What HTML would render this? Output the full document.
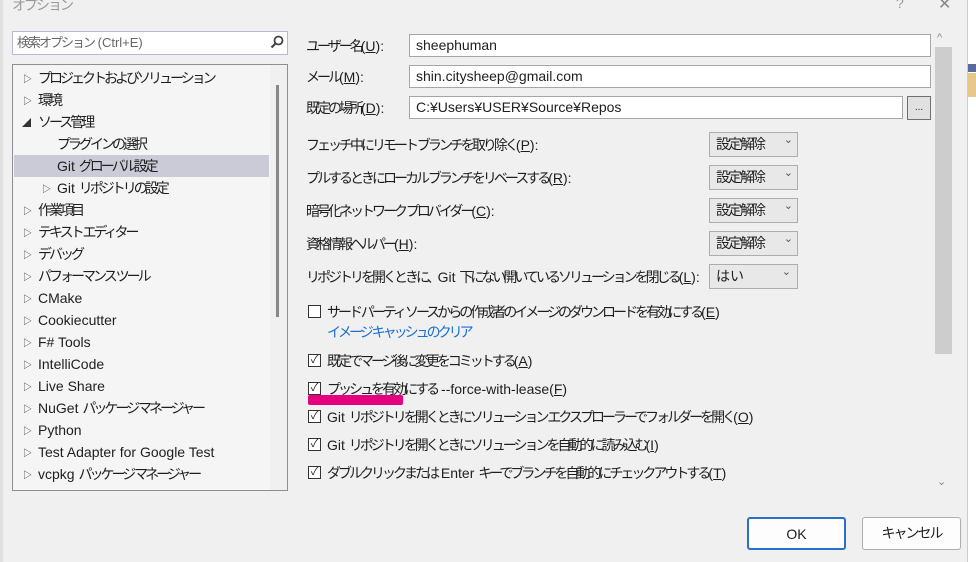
<!DOCTYPE html><html><head><meta charset="utf-8"><style>
*{margin:0;padding:0;box-sizing:border-box}
html,body{width:976px;height:562px;overflow:hidden}
body{background:#f0f0f0;font-family:"Liberation Sans","Noto Sans CJK JP",sans-serif;font-size:14px;color:#1e1e1e;position:relative}
.a{position:absolute;white-space:nowrap}
.j{letter-spacing:-3px}
.j2{letter-spacing:-2px}
.tree{left:12px;top:64px;width:276px;height:427px;border:1px solid #8e8e93;background:#f5f5f5}
.ti{position:absolute;height:22px;line-height:22px;font-size:14px;white-space:nowrap}
.tri{position:absolute;font-size:9px;color:#333;white-space:nowrap}
.inp{position:absolute;left:409px;width:522px;height:23px;background:#fff;border:1px solid #a6a6a6;line-height:21px;padding-left:6px;font-size:14px;white-space:nowrap}
.dd{position:absolute;left:709px;width:89px;height:25px;background:#e8e8e8;border:1px solid #adadad;line-height:23px;padding-left:6px;white-space:nowrap}
.dd:after{content:"⌄";position:absolute;right:6px;top:-4px;font-size:11px;color:#555}
.lbl{position:absolute;left:306px;font-size:14px;line-height:20px;white-space:nowrap}
.cb{position:absolute;left:308px;width:13px;height:13px;border:1px solid #333;background:#fff;font-size:11px;line-height:11px;text-align:center}
.ct{position:absolute;left:327px;line-height:20px;white-space:nowrap}
.btn{position:absolute;top:517px;width:99px;height:33px;border:1px solid #adadad;background:#fdfdfd;text-align:center;line-height:31px;border-radius:3px;white-space:nowrap}
</style></head><body>
<div class="a" style="left:0;top:0;width:3px;height:562px;background:#e0e0e0"></div>
<div class="a j2" style="left:12px;top:-5px;color:#999;font-size:14px">オプション</div>
<div class="a" style="left:896px;top:-5px;color:#999">?</div>
<div class="a" style="left:938px;top:-6px;color:#888;font-size:16px">✕</div>
<div class="a" style="left:967px;top:0;width:9px;height:562px;background:#fff;border-left:1px solid #ccc"></div>
<div class="a" style="left:968px;top:64px;width:8px;height:8px;background:#5a6a9a"></div>
<div class="a" style="left:968px;top:73px;width:8px;height:24px;background:#e5c98a"></div>
<div class="a" style="left:12px;top:31px;width:276px;height:24px;background:#fff;border:1px solid #b8b8d0;padding-left:4px;line-height:22px;color:#666;font-size:13px"><span class="j2">検索オプション</span> (Ctrl+E)</div>
<svg class="a" style="left:270px;top:35px" width="14" height="14"><circle cx="8.5" cy="5.5" r="4" fill="none" stroke="#444" stroke-width="1.8"/><line x1="5.5" y1="8.5" x2="1.5" y2="12.5" stroke="#444" stroke-width="2.2"/></svg>
<div class="a tree">
<div class="a" style="left:257px;top:0;width:17px;height:425px;background:#f0f0f0"></div>
<div class="a" style="left:263px;top:20px;width:3px;height:232px;background:#888"></div>
<div class="a" style="left:1px;top:90px;width:255px;height:22px;background:#cacbd6"></div>
</div>
<div style="position:absolute;left:12px;top:67px;width:260px">
<div class="ti j" style="top:0;left:26px">プロジェクトおよびソリューション</div><div class="tri" style="top:5px;left:11px">▷</div>
<div class="ti j" style="top:22px;left:26px">環境</div><div class="tri" style="top:27px;left:11px">▷</div>
<div class="ti j" style="top:44px;left:26px">ソース管理</div><div class="tri" style="top:49px;left:10px">◢</div>
<div class="ti j" style="top:66px;left:45px">プラグインの選択</div>
<div class="ti" style="top:88px;left:45px">Git <span class="j">グローバル設定</span></div>
<div class="ti" style="top:110px;left:45px">Git <span class="j">リポジトリの設定</span></div><div class="tri" style="top:115px;left:30px">▷</div>
<div class="ti j" style="top:132px;left:26px">作業項目</div><div class="tri" style="top:137px;left:11px">▷</div>
<div class="ti j" style="top:154px;left:26px">テキスト エディター</div><div class="tri" style="top:159px;left:11px">▷</div>
<div class="ti j" style="top:176px;left:26px">デバッグ</div><div class="tri" style="top:181px;left:11px">▷</div>
<div class="ti j" style="top:198px;left:26px">パフォーマンス ツール</div><div class="tri" style="top:203px;left:11px">▷</div>
<div class="ti" style="top:220px;left:26px">CMake</div><div class="tri" style="top:225px;left:11px">▷</div>
<div class="ti" style="top:242px;left:26px">Cookiecutter</div><div class="tri" style="top:247px;left:11px">▷</div>
<div class="ti" style="top:264px;left:26px">F# Tools</div><div class="tri" style="top:269px;left:11px">▷</div>
<div class="ti" style="top:286px;left:26px">IntelliCode</div><div class="tri" style="top:291px;left:11px">▷</div>
<div class="ti" style="top:308px;left:26px">Live Share</div><div class="tri" style="top:313px;left:11px">▷</div>
<div class="ti" style="top:330px;left:26px">NuGet <span class="j">パッケージ マネージャー</span></div><div class="tri" style="top:335px;left:11px">▷</div>
<div class="ti" style="top:352px;left:26px">Python</div><div class="tri" style="top:357px;left:11px">▷</div>
<div class="ti" style="top:374px;left:26px">Test Adapter for Google Test</div><div class="tri" style="top:379px;left:11px">▷</div>
<div class="ti" style="top:396px;left:26px">vcpkg <span class="j">パッケージ マネージャー</span></div><div class="tri" style="top:401px;left:11px">▷</div>
</div>
<div class="lbl" style="top:36px"><span class="j">ユーザー名</span>(<u>U</u>):</div>
<div class="lbl" style="top:67px"><span class="j">メール</span>(<u>M</u>):</div>
<div class="lbl" style="top:98px"><span class="j">既定の場所</span>(<u>D</u>):</div>
<div class="inp" style="top:34px">sheephuman</div>
<div class="inp" style="top:65px">shin.citysheep@gmail.com</div>
<div class="inp" style="top:96px;width:494px">C:¥Users¥USER¥Source¥Repos</div>
<div class="a" style="left:907px;top:96px;width:24px;height:24px;background:#e1e1e1;border:1px solid #707070;font-size:10px;text-align:center;line-height:22px">...</div>
<div class="lbl" style="top:135px"><span class="j">フェッチ中にリモート ブランチを取り除く</span>(<u>P</u>):</div>
<div class="lbl" style="top:168px"><span class="j">プルするときにローカル ブランチをリベースする</span>(<u>R</u>):</div>
<div class="lbl" style="top:201px"><span class="j">暗号化ネットワーク プロバイダー</span>(<u>C</u>):</div>
<div class="lbl" style="top:234px"><span class="j">資格情報ヘルパー</span>(<u>H</u>):</div>
<div class="lbl" style="top:267px"><span class="j">リポジトリを開くときに、</span>Git <span class="j">下にない開いているソリューションを閉じる</span>(<u>L</u>):</div>
<div class="dd j2" style="top:132px">設定解除</div>
<div class="dd j2" style="top:165px">設定解除</div>
<div class="dd j2" style="top:198px">設定解除</div>
<div class="dd j2" style="top:231px">設定解除</div>
<div class="dd" style="top:264px">はい</div>
<div class="a" style="left:935px;top:47px;width:17px;height:307px;background:#cdcdcd"></div>
<div class="a" style="left:937px;top:32px;color:#888;font-size:11px">^</div>
<div class="a" style="left:937px;top:475px;color:#888;font-size:11px">⌄</div>
<div class="cb" style="top:305px"></div><div class="ct" style="top:302px"><span class="j">サード パーティ ソースからの作成者のイメージのダウンロードを有効にする</span>(<u>E</u>)</div>
<div class="ct j" style="top:322px;color:#1a6fd1">イメージ キャッシュのクリア</div>
<div class="cb" style="top:354px">✓</div><div class="ct" style="top:351px"><span class="j">既定でマージ後に変更をコミットする</span>(<u>A</u>)</div>
<div class="a" style="left:308px;top:395px;width:95px;height:10px;background:#e5007f;border-radius:2px"></div>
<div class="cb" style="top:382px">✓</div><div class="ct" style="top:379px"><span class="j">プッシュを有効にする</span> --force-with-lease(<u>F</u>)</div>
<div class="cb" style="top:410px">✓</div><div class="ct" style="top:407px">Git <span class="j">リポジトリを開くときにソリューション エクスプローラーでフォルダーを開く</span>(<u>O</u>)</div>
<div class="cb" style="top:438px">✓</div><div class="ct" style="top:435px">Git <span class="j">リポジトリを開くときにソリューションを自動的に読み込む</span>(<u>I</u>)</div>
<div class="cb" style="top:466px">✓</div><div class="ct" style="top:463px"><span class="j">ダブルクリックまたは</span> Enter <span class="j">キーでブランチを自動的にチェックアウトする</span>(<u>T</u>)</div>
<div class="btn" style="left:747px;border:2px solid #2a6fc9">OK</div>
<div class="btn j2" style="left:862px">キャンセル</div>
</body></html>
